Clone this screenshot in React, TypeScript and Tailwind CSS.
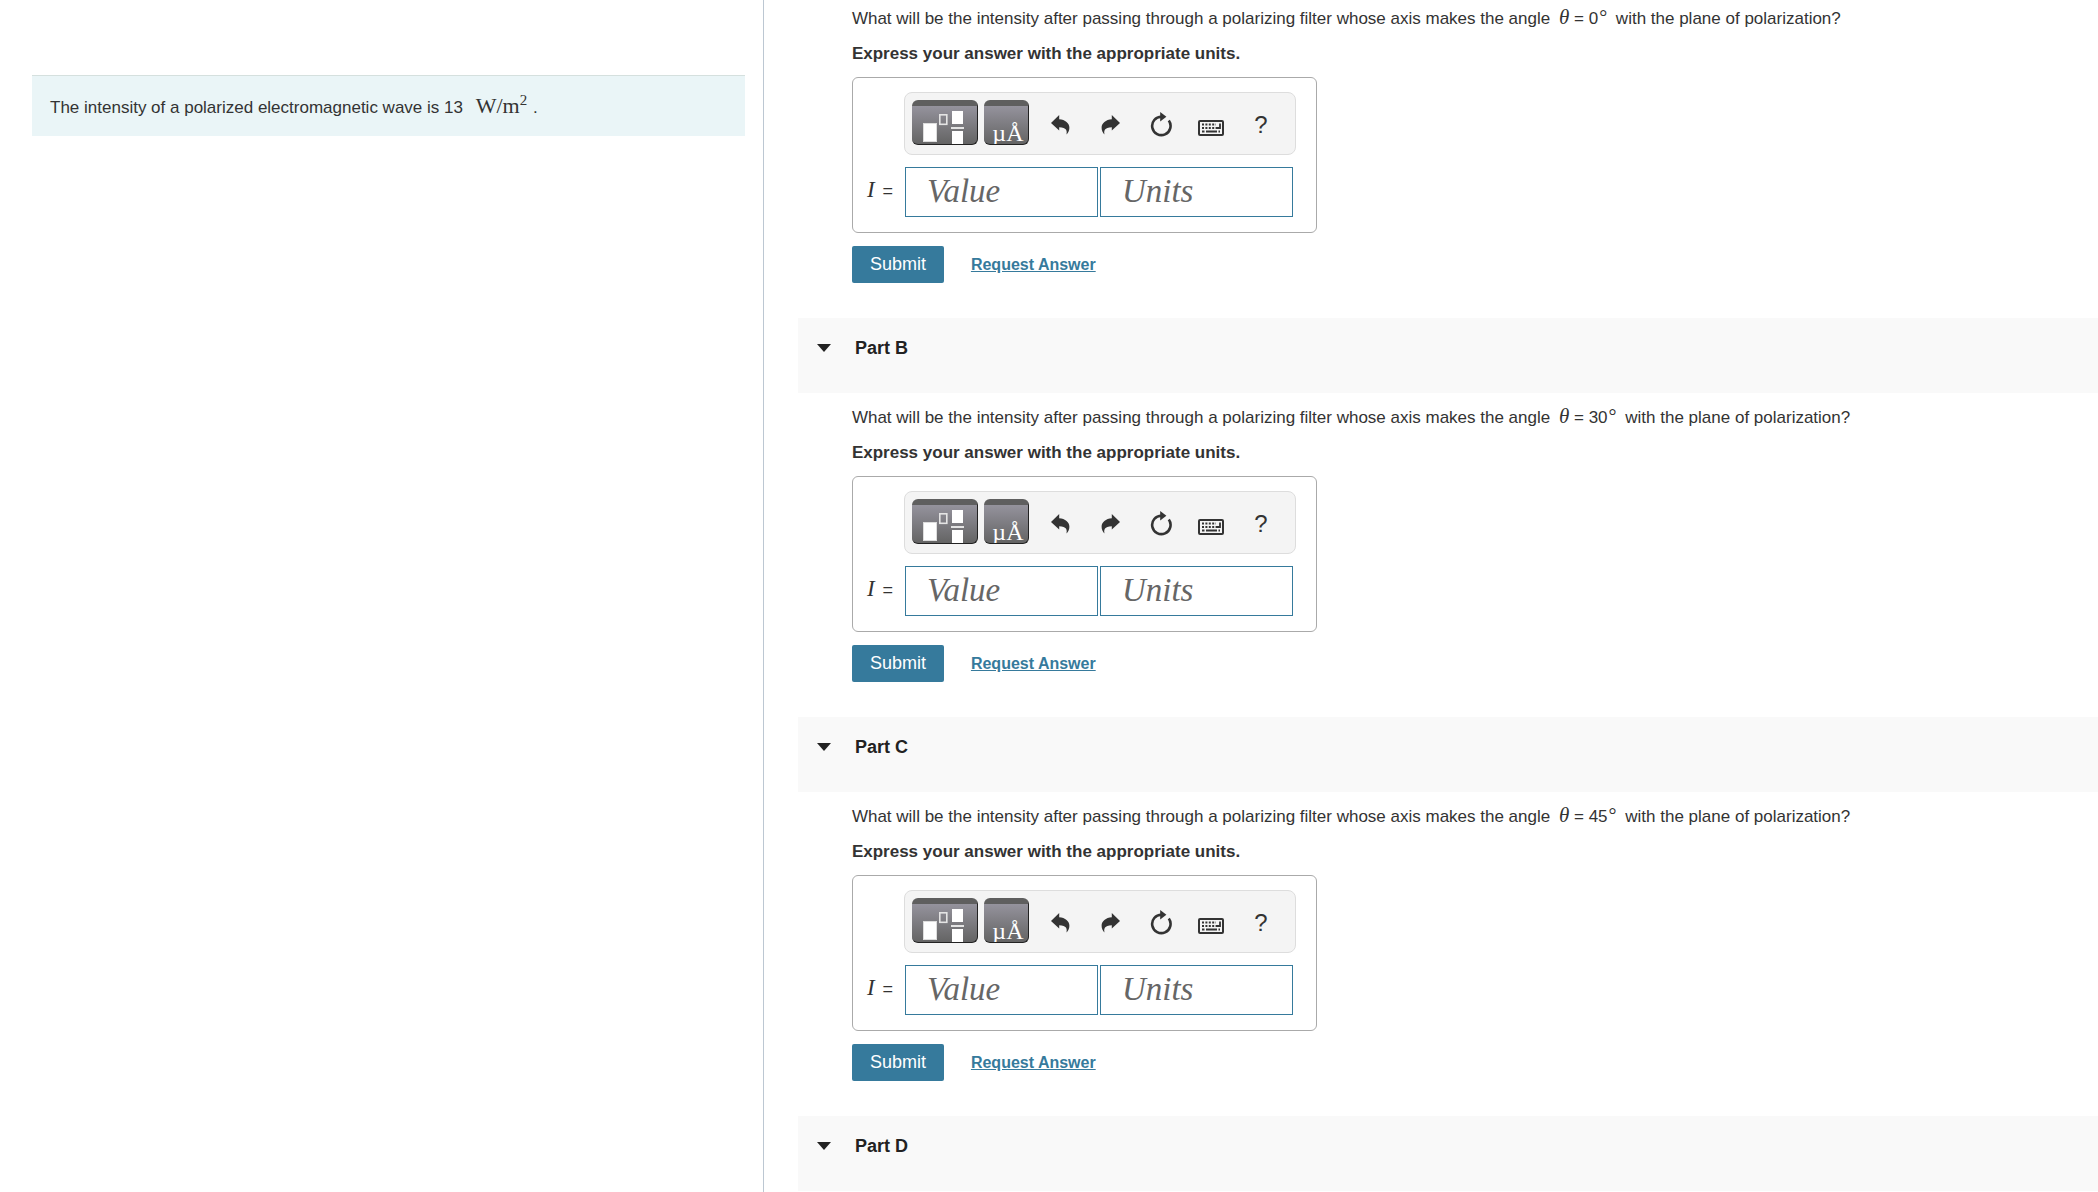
import type { ReactNode } from "react";

const parts = [
  { id: "A", angle: "0" },
  { id: "B", angle: "30" },
  { id: "C", angle: "45" },
  { id: "D", angle: null },
];

const UndoIcon = () => (
  <svg width="19" height="20" viewBox="0 0 19 20" fill="#333" aria-hidden="true">
    <path d="M0 8 8.2 0v4.3c6 .3 10.2 4 10.2 8.4 0 2.8-1.2 5.2-3 6.9 1-3.9.2-7.2-7.2-7.400v3.300z" />
  </svg>
);

const RedoIcon = () => (
  <svg width="19" height="20" viewBox="0 0 19 20" fill="#333" aria-hidden="true">
    <path d="M19 8 10.8 0v4.3C4.8 4.6.6 8.3.6 12.7c0 2.8 1.2 5.2 3 6.9-1-3.9-.2-7.200 7.200-7.400v3.300z" />
  </svg>
);

const ResetIcon = () => (
  <svg width="22" height="25" viewBox="0 0 22 25" aria-hidden="true">
    <path d="M11.5 4.700A9.200 9.200 0 1 0 18.800 8.500" fill="none" stroke="#333" strokeWidth="2.600" />
    <path d="M10.200 0l6.200 4.800-6.200 4.800z" fill="#333" />
  </svg>
);

const KeyboardIcon = () => (
  <svg width="26" height="16" viewBox="0 0 26 16" fill="none" stroke="#333" aria-hidden="true">
    <rect x="1" y="1" width="24" height="14" rx="1" strokeWidth="2" />
    <path d="M4 4.500h14M4 8h15" strokeWidth="1.800" strokeDasharray="2 1.400" />
    <path d="M22 3.500v4.500h-3" strokeWidth="1.800" />
    <path d="M4 11.500h2.500M8 11.500h11M20.500 11.500H22" strokeWidth="1.800" />
  </svg>
);

const TemplateIcon = () => (
  <svg width="42" height="34" viewBox="0 0 42 34" aria-hidden="true">
    <rect x="0.500" y="13.500" width="13" height="18" fill="#fff" stroke="#ddd" />
    <rect x="16.800" y="4.800" width="7" height="9.500" fill="none" stroke="#e4e4e4" strokeWidth="1.600" />
    <rect x="29" y="1" width="11" height="13" fill="#fff" />
    <path d="M28 18h13" stroke="#e4e4e4" strokeWidth="2" />
    <rect x="29" y="21" width="11" height="13" fill="#fff" />
  </svg>
);

const PaletteButton = ({ label, className, children }: { label: string; className: string; children: ReactNode }) => (
  <button
    type="button"
    aria-label={label}
    className={`flex h-[45px] items-end justify-center overflow-hidden rounded-md border-t-[6px] border-r border-b border-t-[#5f5f5f] border-r-[#222] border-b-[#222] bg-linear-to-b from-[#95939d] to-[#646464] text-white ${className}`}
  >
    {children}
  </button>
);

const IconButton = ({ label, children }: { label: string; children: ReactNode }) => (
  <button type="button" aria-label={label} className="flex h-[45px] w-[50px] items-center justify-center pt-1">
    {children}
  </button>
);

const Toolbar = () => (
  <div className="flex w-[392px] items-center rounded-lg border border-[#ddd] bg-[#f4f4f4] px-[7px] pt-[7px] pb-[9px]">
    <PaletteButton label="Templates" className="w-[66px]">
      <TemplateIcon />
    </PaletteButton>
    <PaletteButton label="Symbols" className="ml-[6px] w-[45px] pl-1">
      <span className="font-['Liberation_Serif',serif] text-[24px] leading-[22px]">µÅ</span>
    </PaletteButton>
    <div className="ml-[7px] flex">
      <IconButton label="Undo">
        <UndoIcon />
      </IconButton>
      <IconButton label="Redo">
        <RedoIcon />
      </IconButton>
      <IconButton label="Reset">
        <ResetIcon />
      </IconButton>
      <IconButton label="Keyboard shortcuts">
        <span className="pt-[6px]">
          <KeyboardIcon />
        </span>
      </IconButton>
      <IconButton label="Help">
        <span className="text-[24px] leading-6 text-[#333]">?</span>
      </IconButton>
    </div>
  </div>
);

const AnswerField = ({ id, label }: { id: string; label: string }) => (
  <input
    id={id}
    type="text"
    placeholder={label}
    aria-label={label}
    className="h-[50px] w-[193px] border border-[#367a9c] bg-white px-[21px] pb-[2px] font-['Liberation_Serif',serif] text-[33px] italic placeholder:text-[#666]"
  />
);

const PartHeader = ({ id }: { id: string }) => (
  <button type="button" aria-expanded="true" className="flex h-[75px] w-full bg-[#f9f9f9] pt-[18px] pl-[19px]">
    <svg width="14" height="8" viewBox="0 0 14 8" className="mt-2" aria-hidden="true">
      <path d="M0 0h14L7 8z" fill="#222" />
    </svg>
    <span className="ml-6 text-[18px] leading-6 font-bold text-[#222]">Part {id}</span>
  </button>
);

const PartBody = ({ id, angle, first }: { id: string; angle: string; first: boolean }) => (
  <form className={`pb-[35px] pl-[54px] ${first ? "pt-[7px]" : "pt-[13px]"}`} onSubmit={(e) => e.preventDefault()}>
    <p className="text-[17px] leading-6 whitespace-nowrap">
      What will be the intensity after passing through a polarizing filter whose axis makes the angle{" "}
      <i className="ml-1 font-['Liberation_Serif',serif] text-[21px] leading-none">θ</i> = {angle}
      <span className="mr-1 ml-px font-['Liberation_Serif',serif] text-[20px] leading-none">°</span> with the plane of
      polarization?
    </p>
    <p className="mt-[11px] text-[17px] leading-6 font-bold">Express your answer with the appropriate units.</p>
    <div className="mt-[11px] w-[465px] rounded-md border border-[#aaa] pt-[14px] pb-[15px] pl-[14px]">
      <div className="pl-[37px]">
        <Toolbar />
      </div>
      <div className="mt-3 flex items-center">
        <label htmlFor={`value-${id}`} className="w-[38px] pb-1 text-[18px]">
          <i className="mr-[3px] font-['Liberation_Serif',serif] text-[23px]">I</i> =
        </label>
        <div className="flex gap-[2px]">
          <AnswerField id={`value-${id}`} label="Value" />
          <AnswerField id={`units-${id}`} label="Units" />
        </div>
      </div>
    </div>
    <div className="mt-[13px] flex items-center gap-[27px]">
      <button type="submit" className="h-[37px] w-[92px] rounded-xs bg-[#367a9c] text-[18px] text-white">
        Submit
      </button>
      <a href="#" className="text-[16px] font-bold text-[#367a9c] underline">
        Request Answer
      </a>
    </div>
  </form>
);

export default function App() {
  return (
    <div className="grid min-h-screen grid-cols-[4fr_7fr] bg-white font-['Liberation_Sans',Arial,sans-serif] text-[#333]">
      <aside className="pt-[75px] pr-[18px] pl-8">
        <div className="flex h-[61px] items-center border-t border-[#d5e0de] bg-[#eaf5f7] px-[18px] pt-[2px] text-[17px]">
          <p className="leading-6">
            The intensity of a polarized electromagnetic wave is 13{" "}
            <span className="mr-px ml-2 font-['Liberation_Serif',serif] text-[22px] leading-none">
              W/m<sup className="text-[15px]">2</sup>
            </span>{" "}
            .
          </p>
        </div>
      </aside>
      <main className="min-w-0 border-l border-[#bcc7d2] pl-[34px]">
        {parts.map(({ id, angle }, i) => (
          <section key={id}>
            {i > 0 && <PartHeader id={id} />}
            {angle !== null && <PartBody id={id} angle={angle} first={i === 0} />}
          </section>
        ))}
      </main>
    </div>
  );
}
